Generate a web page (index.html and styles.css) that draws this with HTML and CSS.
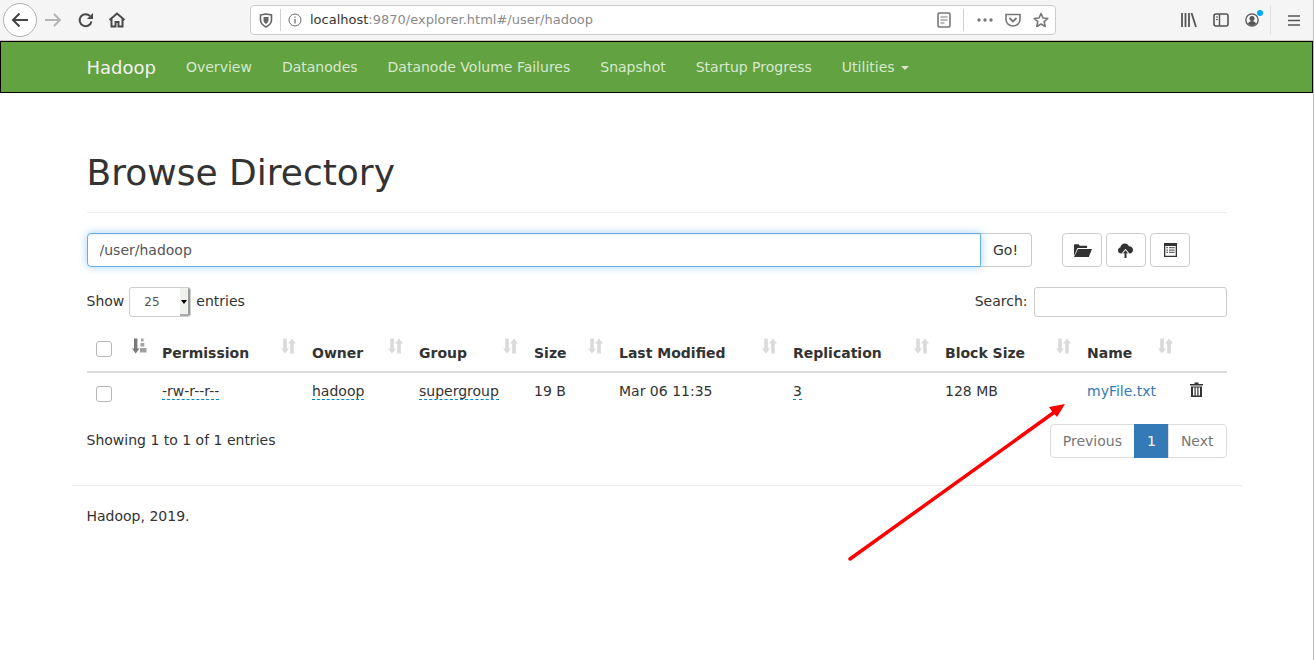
FILE: index.html
```html
<!DOCTYPE html>
<html lang="en">
<head>
<meta charset="utf-8">
<title>Browsing HDFS</title>
<link rel="stylesheet" href="styles.css">
</head>
<body>
<svg class="defs" width="0" height="0">
  <defs>
    <symbol id="sort" viewBox="0 0 15 16">
      <path d="M2.200 0.500h3.600v10h2.200L4 15.500 0 10.500h2.200z"/>
      <path d="M11 0.500l4 5h-2.200v10H9.200v-10H7z"/>
    </symbol>
  </defs>
</svg>
<div class="browser">
  <div class="nav-btns">
    <span class="back"><svg width="20" height="20" viewBox="0 0 20 20"><path d="M18 10H3M9.500 3.500 3 10l6.500 6.500" fill="none" stroke="#444" stroke-width="2"/></svg></span>
    <svg class="fwd" width="18" height="18" viewBox="0 0 18 18"><path d="M1 9h15M10 3l6 6-6 6" fill="none" stroke="#b3b3b3" stroke-width="1.800"/></svg>
    <svg class="reload" width="16" height="16" viewBox="0 0 16 16"><path d="M13.500 9.500A6 6 0 1 1 12 4" fill="none" stroke="#4a4a4a" stroke-width="2"/><path d="M15 1v6H9z" fill="#4a4a4a"/></svg>
    <svg class="home" width="18" height="16" viewBox="0 0 18 16"><path d="M1.500 8 9 1.500 16.500 8M3.500 7v7.500h4V10h3v4.500h4V7" fill="none" stroke="#4a4a4a" stroke-width="2"/></svg>
  </div>
  <div class="urlbar">
    <svg class="shield" width="14" height="15" viewBox="0 0 14 15"><path d="M1.500 2 7 1l5.500 1v5c0 3-2.500 5.500-5.500 7-3-1.500-5.500-4-5.500-7z" fill="none" stroke="#666" stroke-width="1.600"/><path d="M4.500 4h5v3c0 1.500-1 3-2.500 4-1.500-1-2.500-2.500-2.500-4z" fill="#666"/></svg>
    <span class="sep"></span>
    <svg class="info" width="14" height="14" viewBox="0 0 14 14"><circle cx="7" cy="7" r="6" fill="none" stroke="#666"/><path d="M7 6v4.500M7 3.500v1.300" stroke="#666" stroke-width="1.200"/></svg>
    <span class="url"><b>localhost</b>:9870/explorer.html#/user/hadoop</span>
    <svg class="reader" width="14" height="16" viewBox="0 0 14 16"><rect x="1" y="1" width="12" height="14" rx="1.500" fill="none" stroke="#777" stroke-width="1.600"/><path d="M3.500 5h7M3.500 8h7M3.500 11h4" stroke="#777"/></svg>
    <span class="sep sep2"></span>
    <svg class="dots" width="16" height="4" viewBox="0 0 16 4"><circle cx="2" cy="2" r="1.700" fill="#777"/><circle cx="8" cy="2" r="1.700" fill="#777"/><circle cx="14" cy="2" r="1.700" fill="#777"/></svg>
    <svg class="pocket" width="16" height="14" viewBox="0 0 16 14"><path d="M1 1.500h14v5a7 6.500 0 0 1-14 0z" fill="none" stroke="#777" stroke-width="1.600"/><path d="M4.500 5 8 8.500 11.500 5" fill="none" stroke="#777" stroke-width="1.800"/></svg>
    <svg class="star" width="16" height="16" viewBox="0 0 16 16"><path d="M8 1.500 10 6l4.800.5-3.600 3.200 1 4.800L8 12l-4.200 2.500 1-4.800L1.200 6.500 6 6z" fill="none" stroke="#777" stroke-width="1.600" stroke-linejoin="round"/></svg>
  </div>
  <div class="tools">
    <svg class="lib" width="16" height="14" viewBox="0 0 16 14"><path d="M1 0v14M4.500 0v14M8 0v14M10.500 0 15 14" stroke="#555" stroke-width="1.800" fill="none"/></svg>
    <svg class="side" width="16" height="14" viewBox="0 0 16 14"><rect x="1" y="1" width="14" height="12" rx="2" fill="none" stroke="#555" stroke-width="1.600"/><path d="M6.500 1v12" stroke="#555" stroke-width="1.400"/><path d="M3 4h2M3 6.500h2" stroke="#555"/></svg>
    <span class="acct"><svg width="14" height="14" viewBox="0 0 14 14"><circle cx="7" cy="7" r="6.200" fill="none" stroke="#555" stroke-width="1.300"/><circle cx="7" cy="5.500" r="2.500" fill="#555"/><path d="M2.800 11c.8-2 2.400-3 4.200-3s3.400 1 4.200 3L7 13z" fill="#555"/></svg><i class="dot"></i></span>
    <span class="sep sep3"></span>
    <svg class="menu" width="12" height="11" viewBox="0 0 12 11"><path d="M0 1h12M0 5.500h12M0 10h12" stroke="#555" stroke-width="1.700"/></svg>
  </div>
</div>

<nav class="navbar">
  <a class="brand">Hadoop</a>
  <a class="nav-link">Overview</a>
  <a class="nav-link">Datanodes</a>
  <a class="nav-link">Datanode Volume Failures</a>
  <a class="nav-link">Snapshot</a>
  <a class="nav-link">Startup Progress</a>
  <a class="nav-link">Utilities <span class="caret"></span></a>
</nav>

<main class="container">
  <div class="page-header"><h1>Browse Directory</h1></div>

  <div class="path-row">
    <input class="path-input" type="text" value="/user/hadoop">
    <button class="btn go">Go!</button>
    <div class="actions">
      <button class="btn icon-btn"><svg class="ic-folder" width="18" height="14" viewBox="0 0 18 14"><path d="M0 13V2.500C0 1.800.5 1.300 1.200 1.300h3.500l1 1.400h6.600c.5 0 .8.400.8.800V5H3.500z" fill="#333"/><path d="M4 6h14l-3.200 8H0z" fill="#333"/></svg></button>
      <button class="btn icon-btn"><svg width="15" height="15" viewBox="0 0 15 15"><path d="M3.300 10.500C1.400 10.500 0 9.200 0 7.500 0 6 1 4.900 2.300 4.600 2.500 2.200 4.400.5 6.800.5c1.900 0 3.500 1.100 4.100 2.700C13.200 3.100 15 4.700 15 6.900c0 2-1.500 3.600-3.500 3.600z" fill="#333"/><path d="M7.500 5.800 11.600 10.800H9.100V15H5.900v-4.200H3.400z" fill="#fff"/><path d="M7.500 7.200 10 10.200H8.500V15h-2v-4.800H5z" fill="#333"/></svg></button>
      <button class="btn icon-btn"><svg class="ic-list" width="13" height="14" viewBox="0 0 13 14"><path fill-rule="evenodd" d="M0 0h13v14H0zM1.300 3v9.700h10.400V3z" fill="#333"/><path d="M2.300 4h1.700v1.300H2.300zM5 4h5.700v1.300H5zM2.300 6.400h1.700v1.300H2.300zM5 6.400h5.700v1.300H5zM2.300 8.800h1.700v1.300H2.300zM5 8.800h5.700v1.300H5z" fill="#666"/></svg></button>
    </div>
  </div>

  <div class="controls">
    <label class="show">Show <span class="select"><span class="select-val">25</span><span class="select-arrow"></span></span> entries</label>
    <label class="search">Search: <input class="search-input" type="text"></label>
  </div>

  <table class="files">
    <colgroup>
      <col class="c0"><col class="c1"><col class="c2"><col class="c3"><col class="c4"><col class="c5"><col class="c6"><col class="c7"><col class="c8"><col class="c9">
    </colgroup>
    <thead>
      <tr>
        <th><span class="check"></span><svg class="sort active" width="15" height="16" viewBox="0 0 15 16"><path d="M2 .5h3.400v10h2.100L3.700 15.500 0 10.500h2z" fill="#7a7a7a"/><path d="M9 .5h2.500v3H9zM8.500 5h3.800v3.500H8.500zM8 10h6.500v4.500H8z" fill="#a0a0a0"/></svg></th>
        <th>Permission<svg class="sort"><use href="#sort"/></svg></th>
        <th>Owner<svg class="sort"><use href="#sort"/></svg></th>
        <th>Group<svg class="sort"><use href="#sort"/></svg></th>
        <th>Size<svg class="sort"><use href="#sort"/></svg></th>
        <th>Last Modified<svg class="sort"><use href="#sort"/></svg></th>
        <th>Replication<svg class="sort"><use href="#sort"/></svg></th>
        <th>Block Size<svg class="sort"><use href="#sort"/></svg></th>
        <th>Name<svg class="sort"><use href="#sort"/></svg></th>
        <th></th>
      </tr>
    </thead>
    <tbody>
      <tr>
        <td><span class="check"></span></td>
        <td><span class="editable">-rw-r--r--</span></td>
        <td><span class="editable">hadoop</span></td>
        <td><span class="editable">supergroup</span></td>
        <td>19 B</td>
        <td>Mar 06 11:35</td>
        <td><span class="editable">3</span></td>
        <td>128 MB</td>
        <td><a class="file-link">myFile.txt</a></td>
        <td class="trash-cell"><svg width="13" height="15" viewBox="0 0 13 15"><path d="M0 2h4.500V.5h4V2H13v1.500H0z" fill="#333"/><path fill-rule="evenodd" d="M1 4.500h11V15H1zM3 5.500v8h1.500v-8zM5.700 5.500v8h1.600v-8zM8.500 5.500v8H10v-8z" fill="#333"/></svg></td>
      </tr>
    </tbody>
  </table>

  <div class="table-foot">
    <div class="info-text">Showing 1 to 1 of 1 entries</div>
    <div class="pagination"><a class="page first">Previous</a><a class="page current">1</a><a class="page last">Next</a></div>
  </div>

  <div class="footer-rule"></div>
  <p class="footer-text">Hadoop, 2019.</p>
</main>

<svg class="arrow" width="230" height="170" viewBox="0 0 230 170"><path d="M4 160 210 12" stroke="#f00" stroke-width="3.500" stroke-linecap="round" fill="none"/><path d="M219 5 211 18 206.500 13 203 8z" fill="#f00"/></svg>
</body>
</html>
```

FILE: styles.css
```css
* { box-sizing: border-box; }
html, body { margin: 0; padding: 0; }
body {
  position: relative;
  width: 1314px;
  height: 660px;
  overflow: hidden;
  background: #fff;
  color: #333;
  font: 14px/20px "DejaVu Sans", sans-serif;
  border-right: 1px solid #bdbdbd;
}
.defs { position: absolute; }

/* browser chrome */
.browser {
  height: 41px;
  background: #f5f5f5;
  border-bottom: 1px solid #c4c4c4;
  display: flex;
  align-items: center;
}
.nav-btns { display: flex; align-items: center; width: 250px; padding-left: 3px; }
.back {
  width: 34px; height: 34px;
  border: 1px solid #b1b1b1; border-radius: 50%;
  background: #fff;
  display: flex; align-items: center; justify-content: center;
}
.fwd { margin-left: 7px; }
.reload { margin-left: 16px; }
.home { margin-left: 14px; }
.urlbar {
  width: 806px; height: 30px;
  background: #fff;
  border: 1px solid #ccc; border-radius: 4px;
  display: flex; align-items: center;
  padding-left: 8px;
}
.sep { width: 1px; height: 22px; background: #d0d0d0; margin-left: 7px; }
.info { margin-left: 7px; }
.url { margin-left: 8px; width: 621px; font-size: 13px; color: #8a8a8a; white-space: nowrap; }
.url b { font-weight: 400; color: #333; }
.reader { margin-left: 6px; }
.sep2 { margin-left: 12px; }
.dots { margin-left: 13px; }
.pocket { margin-left: 12px; }
.star { margin-left: 12px; }
.tools { display: flex; align-items: center; padding-left: 125px; }
.side { margin-left: 16px; }
.acct { position: relative; margin-left: 16px; display: flex; }
.dot { position: absolute; width: 6px; height: 6px; right: -4px; top: -3px; border-radius: 50%; background: #0af; }
.sep3 { height: 30px; margin-left: 11px; background: #e0e0e0; }
.menu { margin-left: 17px; }

/* navbar */
.navbar {
  height: 52px;
  background: #62a241;
  border: 1px solid #000;
  display: flex;
  align-items: center;
  padding-left: 85.5px;
}
.brand { font-size: 18px; color: #f2f2f2; margin-right: 30px; position: relative; top: 1px; }
.nav-link { color: #d8e8cf; margin-right: 30px; }
.caret {
  display: inline-block; width: 0; height: 0;
  margin-left: 2px; vertical-align: middle;
  border-top: 4px solid #d8e8cf;
  border-left: 4px solid transparent;
  border-right: 4px solid transparent;
}

/* content */
.container { width: 1170px; margin-left: 71.5px; padding: 0 15px; }
.page-header { padding-top: 60px; padding-bottom: 19px; border-bottom: 1px solid #eee; }
h1 { margin: 0; font-size: 36px; line-height: 40px; font-weight: 400; }

.path-row { display: flex; margin-top: 20px; height: 34px; }
.path-input {
  width: 894px; height: 34px;
  padding: 6px 12px;
  border: 1px solid #66afe9; border-radius: 4px 0 0 4px;
  box-shadow: inset 0 1px 1px rgba(0,0,0,.075), 0 0 8px rgba(102,175,233,.6);
  font: inherit; color: #555; outline: 0;
  position: relative; z-index: 1;
}
.btn {
  height: 34px;
  background: #fff;
  border: 1px solid #ccc; border-radius: 4px;
  font: inherit; color: #333;
  padding: 0;
  display: flex; align-items: center; justify-content: center;
}
.go { width: 51px; border-left: 0; border-radius: 0 4px 4px 0; }
.actions { display: flex; gap: 4px; margin-left: 30px; }
.icon-btn { width: 40px; }
.ic-folder { margin-left: 2px; }
.ic-list { margin-left: 1px; margin-top: -1px; }

.controls { display: flex; justify-content: space-between; align-items: center; height: 30px; margin-top: 20px; }
.show, .search { display: flex; align-items: flex-start; height: 30px; line-height: 28px; }
.show { gap: 5px; }
.select {
  width: 62px; height: 30px;
  border: 1px solid #ccc; border-radius: 3px;
  display: flex; align-items: center; justify-content: space-between;
  font-size: 12px; color: #555;
  padding-left: 14px;
  overflow: hidden;
}
.select-arrow {
  width: 10px; height: 28px;
  background: #eef1ec;
  border-right: 2px solid #999; border-bottom: 2px solid #aaa;
  position: relative;
}
.select-arrow::after {
  content: "";
  position: absolute; left: 1px; top: 12px;
  border-top: 4px solid #000;
  border-left: 3px solid transparent;
  border-right: 3px solid transparent;
}
.search { gap: 6px; }
.search-input { width: 193px; height: 30px; border: 1px solid #ccc; border-radius: 3px; background: #fff; }

.files { width: 1139.5px; margin-left: .5px; margin-top: 15px; border-collapse: collapse; table-layout: fixed; }
.c0 { width: 67px; } .c1 { width: 150px; } .c2 { width: 107px; } .c3 { width: 115px; } .c4 { width: 85px; }
.c5 { width: 174px; } .c6 { width: 152px; } .c7 { width: 142px; } .c8 { width: 102px; } .c9 { width: 45.5px; }
th {
  position: relative;
  height: 40px;
  padding: 8px;
  text-align: left;
  vertical-align: bottom;
  font-weight: 700;
  border-bottom: 2px solid #ddd;
}
td { height: 37px; padding: 8px; vertical-align: top; }
.check {
  display: block; width: 16px; height: 16px;
  border: 1px solid #b8b8b8; border-radius: 3px; background: #fff;
}
td .check { margin: 5px 0 0 1px; }
th .check { margin: 0 0 6px 1px; }
.sort { position: absolute; right: 8px; top: 6px; width: 15px; height: 16px; fill: #dadada; }
.sort.active { right: 7px; }
.editable { border-bottom: 1px dashed #08c; }
.file-link { color: #337ab7; }
.trash-cell svg { display: block; margin: 1px 0 0 1px; }

.table-foot { display: flex; justify-content: space-between; margin-top: 14px; height: 34px; }
.info-text { padding-top: 6px; }
.pagination { display: flex; height: 34px; }
.page { padding: 6px 12px; border: 1px solid #ddd; margin-left: -1px; color: #777; background: #fff; }
.first { border-radius: 4px 0 0 4px; }
.last { border-radius: 0 4px 4px 0; }
.current { background: #337ab7; border-color: #337ab7; color: #fff; }

.footer-rule { height: 1px; background: #eee; margin: 27px -15px 0; }
.footer-text { margin: 20px 0 0; }

.arrow { position: absolute; left: 846px; top: 399px; }
```
